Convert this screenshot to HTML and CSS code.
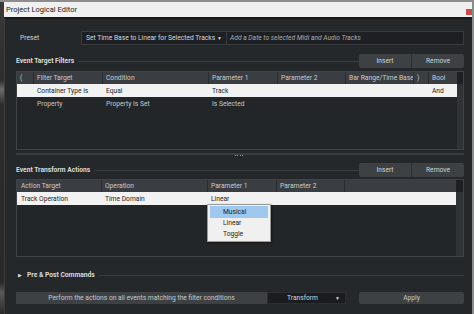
FILE: index.html
```html
<!DOCTYPE html>
<html lang="en">
  <head>
    <title>Project Logical Editor</title>
    <meta charset="UTF-8">
    <link rel="stylesheet" href="styles.css">
  </head>
  <body>
    <div class="desk">
      <div class="side"></div>
      <div class="window">
        <div class="titlebar">
          <span>Project Logical Editor</span>
          <span class="close"></span>
        </div>
        <div class="main">
          <div class="preset-row">
            <span class="label">Preset</span>
            <div class="select preset-select">Set Time Base to Linear for Selected Tracks <span class="arrow">&#9660;</span></div>
            <div class="field">Add a Date to selected Midi and Audio Tracks</div>
          </div>

          <div class="section-head">
            <span class="section-title">Event Target Filters</span>
            <span class="rule"></span>
            <div class="btns"><span class="btn">Insert</span><span class="btn">Remove</span></div>
          </div>
          <div class="table filters">
            <div class="rows">
              <div class="row head">
                <span>(</span><span>Filter Target</span><span>Condition</span><span>Parameter 1</span><span>Parameter 2</span><span>Bar Range/Time Base</span><span>)</span><span>Bool</span>
              </div>
              <div class="row sel">
                <span></span><span>Container Type is</span><span>Equal</span><span>Track</span><span></span><span></span><span></span><span>And</span>
              </div>
              <div class="row">
                <span></span><span>Property</span><span>Property Is Set</span><span>Is Selected</span><span></span><span></span><span></span><span></span>
              </div>
            </div>
            <div class="scroll"><span class="cap"></span></div>
          </div>

          <div class="splitter"><span class="dots"></span></div>

          <div class="section-head second">
            <span class="section-title">Event Transform Actions</span>
            <span class="rule"></span>
            <div class="btns"><span class="btn">Insert</span><span class="btn">Remove</span></div>
          </div>
          <div class="table actions">
            <div class="rows">
              <div class="row head">
                <span>Action Target</span><span>Operation</span><span>Parameter 1</span><span>Parameter 2</span><span></span>
              </div>
              <div class="row sel">
                <span>Track Operation</span><span>Time Domain</span><span>Linear</span><span></span><span></span>
              </div>
            </div>
            <div class="scroll"><span class="cap"></span></div>
            <ul class="menu">
              <li class="hover">Musical</li>
              <li>Linear</li>
              <li>Toggle</li>
            </ul>
          </div>

          <div class="pre-row">
            <span class="tri">&#9654;</span>
            <span class="section-title">Pre &amp; Post Commands</span>
            <span class="rule"></span>
          </div>

          <div class="bottom-row">
            <span class="perform">Perform the actions on all events matching the filter conditions</span>
            <span class="select transform">Transform <span class="arrow">&#9660;</span></span>
            <span class="apply">Apply</span>
          </div>
        </div>
      </div>
    </div>
  </body>
</html>
```

FILE: styles.css
```css
* {
  box-sizing: border-box;
}

body {
  margin: 0;
  background: #8c8c8c;
  font-family: Roboto, "Liberation Sans", sans-serif;
  font-size: 6.7px;
  color: #c6c8ca;
  white-space: nowrap;
  overflow: hidden;
}

.desk {
  display: flex;
  padding-top: 2px;
  height: 314px;
}

.side {
  width: 4px;
  background: linear-gradient(#3a3a3a, #2c2c2c 25%, #6a6a6a 28%, #2c2c2c 33%, #2a2a2a 90%, #5a5a5a 93%, #2a2a2a);
}

.window {
  width: 468px;
  display: flex;
  flex-direction: column;
}

.titlebar {
  height: 15px;
  background: #f0f0f0;
  color: #1a1a1a;
  font-size: 7.5px;
  display: flex;
  align-items: center;
  justify-content: space-between;
  padding-left: 2px;
}

.close {
  width: 6px;
  height: 6px;
  background: #c94b4b;
  margin-top: 4px;
}

.main {
  flex: 1;
  background: #25282b;
  border-top: 2px solid #16181a;
  border-left: 1px solid #3a3d40;
  padding: 12px 8px 0 11px;
}

.preset-row {
  display: flex;
  height: 14px;
}

.label {
  width: 65px;
  padding-left: 4px;
  display: flex;
  align-items: center;
  color: #d0d2d4;
}

.select {
  background: #1d1f22;
  border: 1px solid #3a3d40;
  color: #d4d6d8;
  display: flex;
  align-items: center;
  justify-content: space-between;
}

.arrow {
  font-size: 5px;
}

.preset-select {
  width: 146px;
  padding: 0 4px;
}

.field {
  flex: 1;
  background: #1d1f22;
  border: 1px solid #3a3d40;
  border-left: none;
  font-style: italic;
  color: #a9abad;
  display: flex;
  align-items: center;
  padding-left: 3px;
}

.section-head {
  display: flex;
  align-items: center;
  height: 14px;
  margin-top: 9px;
}

.section-head.second {
  margin-top: 6px;
}

.section-title {
  font-weight: bold;
  color: #d8dadc;
}

.rule {
  flex: 1;
  height: 1px;
  background: #3a3d40;
  margin-left: 4px;
}

.btns {
  display: flex;
  width: 105px;
  height: 14px;
  background: #3d4144;
  border-radius: 2px;
}

.btn {
  flex: 1;
  display: flex;
  align-items: center;
  justify-content: center;
  color: #cfd1d3;
}

.btn + .btn {
  border-left: 1px solid #2c2f32;
}

.table {
  position: relative;
  display: flex;
  margin-top: 3px;
  background: #232629;
  border: 1px solid #404346;
}

.filters {
  height: 79px;
}

.actions {
  height: 78px;
  margin-top: 2px;
}

.rows {
  flex: 1;
}

.row {
  display: grid;
  height: 13px;
  align-items: center;
}

.row span {
  padding-left: 3px;
  overflow: hidden;
}

.filters .row {
  grid-template-columns: 17px 69px 106px 69px 68px 68px 15px 28px;
}

.actions .row {
  grid-template-columns: 85px 106px 69px 68px 111px;
}

.row.head {
  height: 12px;
  background: #3a3d41;
  color: #c9cbcd;
}

.row.head span {
  height: 12px;
  line-height: 12px;
  border-right: 1px solid #2a2d30;
}

.row.head span:last-child {
  border-right: none;
}

.row.sel {
  background: #f2f2f2;
  color: #1e1e1e;
}

.actions .row span:first-child {
  padding-left: 4px;
}

.scroll {
  width: 7px;
  background: #303336;
  display: flex;
  flex-direction: column;
}

.cap {
  height: 12px;
  background: #1d1f22;
}

.splitter {
  position: relative;
  height: 4px;
  margin-top: 3px;
  border-top: 2px solid #3a3d40;
}

.dots {
  position: absolute;
  left: 219px;
  top: 0;
  width: 10px;
  height: 1px;
  background: repeating-linear-gradient(90deg, #9a9c9e 0 1px, transparent 1px 2.5px);
}

.menu {
  position: absolute;
  left: 190px;
  top: 24px;
  width: 64px;
  margin: 0;
  padding: 1px 2px;
  list-style: none;
  background: #f0f0f0;
  border: 1px solid #9a9a9a;
  box-shadow: 1px 1px 2px rgba(0, 0, 0, 0.5);
  color: #222;
}

.menu li {
  height: 11px;
  line-height: 11px;
  padding-left: 13px;
}

.menu li.hover {
  background: #9ec8ee;
  height: 12px;
  line-height: 12px;
}

.pre-row {
  display: flex;
  align-items: center;
  height: 12px;
  margin-top: 12px;
}

.tri {
  font-size: 5px;
  color: #d8dadc;
  padding: 0 5px 0 2px;
}

.bottom-row {
  display: flex;
  height: 12px;
  margin-top: 11px;
}

.perform {
  width: 251px;
  background: #3d4144;
  display: flex;
  align-items: center;
  justify-content: center;
}

.transform {
  width: 79px;
  padding: 0 5px 0 19px;
  border-color: #2c2f32;
  background: #1a1c1f;
}

.apply {
  width: 105px;
  margin-left: 13px;
  background: #3d4144;
  border-radius: 2px;
  display: flex;
  align-items: center;
  justify-content: center;
}
```
